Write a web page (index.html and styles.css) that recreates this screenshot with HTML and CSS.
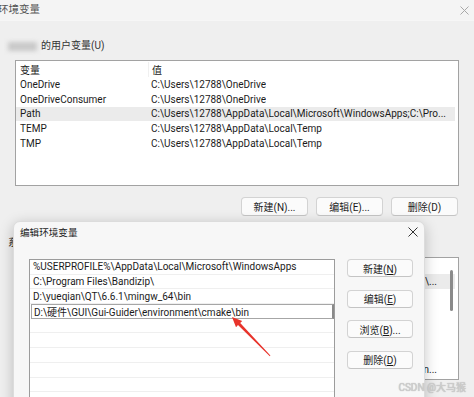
FILE: index.html
```html
<!DOCTYPE html>
<html lang="zh-CN">
<head>
    <meta charset="UTF-8">
    <title>环境变量</title>
    <link rel="stylesheet" href="styles.css">
</head>
<body>
    <div class="win">
        <div class="win-title">
            <span class="title-text">环境变量</span>
            <svg class="win-close" width="9" height="9" viewBox="0 0 9 9"><path d="M0.5 0.5 8.5 8.5M8.5 0.5 0.5 8.5" stroke="#a8a8a8" stroke-width="1"/></svg>
        </div>
        <div class="win-body">
            <div class="group-label"><span class="blur-name"></span>的用户变量(U)</div>
            <div class="listview">
                <div class="lv-head">
                    <span class="col-name">变量</span>
                    <span class="col-value">值</span>
                </div>
                <div class="lv-row"><span class="col-name">OneDrive</span><span class="col-value">C:\Users\12788\OneDrive</span></div>
                <div class="lv-row"><span class="col-name">OneDriveConsumer</span><span class="col-value">C:\Users\12788\OneDrive</span></div>
                <div class="lv-row selected"><span class="col-name">Path</span><span class="col-value">C:\Users\12788\AppData\Local\Microsoft\WindowsApps;C:\Pro...</span></div>
                <div class="lv-row"><span class="col-name">TEMP</span><span class="col-value">C:\Users\12788\AppData\Local\Temp</span></div>
                <div class="lv-row"><span class="col-name">TMP</span><span class="col-value">C:\Users\12788\AppData\Local\Temp</span></div>
            </div>
            <div class="btn-row">
                <button class="btn">新建(N)...</button>
                <button class="btn">编辑(E)...</button>
                <button class="btn">删除(D)</button>
            </div>

            <div class="group-label sys-label">系统变量(S)</div>
            <div class="listview sys-list">
                <div class="lv-head">
                    <span class="col-name">变量</span>
                    <span class="col-value">值</span>
                </div>
                <div class="lv-row selected"><span class="col-name">Path</span><span class="col-value end">C:\Program Files\Common Files\Oracle\Java\javapath;C:\WINDOWS\system32;C:\WINDOWS;%SYSTEMROOT%\System32\Wbem;C:\...</span></div>
                <div class="lv-row"><span class="col-name">PATHEXT</span><span class="col-value">.COM;.EXE;.BAT;.CMD;.VBS</span></div>
                <div class="lv-row"><span class="col-name">PROCESSOR_ARCHITECTURE</span><span class="col-value">AMD64</span></div>
                <div class="lv-row"><span class="col-name">PROCESSOR_IDENTIFIER</span><span class="col-value">Intel64 Family 6</span></div>
                <div class="lv-row"><span class="col-name">PROCESSOR_LEVEL</span><span class="col-value">6</span></div>
                <div class="lv-row"><span class="col-name">PROCESSOR_REVISION</span><span class="col-value">9a03</span></div>
                <div class="lv-row"><span class="col-name">PSModulePath</span><span class="col-value end">%ProgramFiles%\WindowsPowerShell\Modules;C:\WINDOWS\system32\WindowsPowerShell\v1.0\Modules;C:\Program Files\Intel\Win...</span></div>
                <div class="scroll-thumb"></div>
            </div>
        </div>
    </div>

    <!-- edit dialog, sits over the main window -->
    <div class="dialog">
        <div class="dlg-title">
            <span>编辑环境变量</span>
            <svg class="dlg-close" width="10" height="10" viewBox="0 0 10 10"><path d="M0.5 0.5 9.5 9.5M9.5 0.5 0.5 9.5" stroke="#333" stroke-width="1"/></svg>
        </div>
        <div class="dlg-body">
            <div class="path-list">
                <div class="path-row">%USERPROFILE%\AppData\Local\Microsoft\WindowsApps</div>
                <div class="path-row">C:\Program Files\Bandizip\</div>
                <div class="path-row">D:\yueqian\QT\6.6.1\mingw_64\bin</div>
                <div class="path-row editing"><span class="edit-box">D:\硬件\GUI\Gui-Guider\environment\cmake\bin</span></div>
                <div class="path-row"></div>
                <div class="path-row"></div>
                <div class="path-row"></div>
                <div class="path-row"></div>
                <div class="path-row"></div>
                <div class="path-row"></div>
            </div>
            <div class="dlg-buttons">
                <button class="btn">新建(<u>N</u>)</button>
                <button class="btn">编辑(<u>E</u>)</button>
                <button class="btn">浏览(<u>B</u>)...</button>
                <button class="btn">删除(<u>D</u>)</button>
            </div>
        </div>
    </div>

    <svg class="arrow" width="50" height="50" viewBox="0 0 50 50">
        <polygon points="7,7 17.2,11 15.2,13 45.4,45.6 44.8,46.2 13,15.1 11,17.3" fill="#e8332b"/>
    </svg>

    <div class="watermark">CSDN @大马猴</div>
</body>
</html>
```

FILE: styles.css
```css
body {
    margin: 0;
    width: 474px;
    height: 397px;
    overflow: hidden;
    position: relative;
    background: #efefef;
    font-family: Roboto, "Noto Sans CJK SC", sans-serif;
    font-size: 10px;
    color: #1b1b1b;
}
button {
    font-family: inherit;
}
.win-title {
    height: 20px;
    display: flex;
    align-items: center;
    justify-content: space-between;
    background: #f4f4f4;
    padding: 0 5px 0 0;
}
.title-text {
    font-size: 10.5px;
    color: #555;
    margin-left: -2px;
    margin-top: -3px;
}
.win-close {
    margin-top: 1px;
}
.win-body {
    padding: 18px 0 0 0;
    border-top: 1px solid #f6f6f6;
}
.group-label {
    height: 14px;
    line-height: 14px;
    padding-left: 8px;
    display: flex;
    align-items: center;
    color: #333;
}
.blur-name {
    display: inline-block;
    width: 29px;
    height: 9px;
    margin-right: 4px;
    background: #c9c9c9;
    filter: blur(2px);
}
.listview {
    margin: 7px 0 0 15px;
    width: 444px;
    height: 126px;
    box-sizing: border-box;
    border: 1px solid #a2a2a2;
    background: #fff;
    position: relative;
    overflow: hidden;
}
.lv-head {
    height: 16px;
    display: flex;
    align-items: center;
}
.lv-head .col-name {
    border-right: 1px solid #f0f0f0;
}
.lv-row {
    height: 14.75px;
    display: flex;
    align-items: center;
    margin-right: 3px;
}
.lv-row.selected {
    background: #ebebeb;
}
.col-name {
    width: 128px;
    padding-left: 4px;
    flex: none;
    white-space: nowrap;
}
.col-value {
    padding-left: 3px;
    white-space: nowrap;
    overflow: hidden;
}
.col-value.end {
    width: 286px;
    display: flex;
    justify-content: flex-end;
}
.btn-row {
    display: flex;
    justify-content: flex-end;
    gap: 8px;
    margin: 11px 16px 0 0;
}
.btn {
    width: 67px;
    height: 19px;
    padding: 0;
    background: #fbfbfb;
    border: 1px solid #d3d3d3;
    border-bottom-color: #c4c4c4;
    border-radius: 4px;
    font-size: 10px;
    color: #1b1b1b;
}
.sys-label {
    margin-top: 20px;
}
.sys-list {
    height: 123px;
}
.scroll-thumb {
    position: absolute;
    right: 5px;
    top: 12px;
    width: 3px;
    height: 41px;
    border-radius: 2px;
    background: #8a8a8a;
}

.dialog {
    position: absolute;
    left: 13px;
    top: 221px;
    width: 412px;
    height: 200px;
    background: #f7f7f7;
    border: 1px solid #dcdcdc;
    border-radius: 7px;
    box-sizing: border-box;
    box-shadow: 0 3px 14px rgba(0, 0, 0, 0.22);
}
.dlg-title {
    height: 19px;
    display: flex;
    align-items: center;
    justify-content: space-between;
    padding: 0 6px 0 6px;
    font-size: 9.6px;
    color: #222;
}
.dlg-body {
    display: flex;
    gap: 12px;
    padding: 18px 0 0 15px;
}
.path-list {
    width: 306px;
    height: 160px;
    box-sizing: border-box;
    border: 1px solid #9c9c9c;
    background: #fff;
}
.path-row {
    height: 14.7px;
    box-sizing: border-box;
    border-bottom: 1px solid #efefef;
    padding-left: 3px;
    display: flex;
    align-items: center;
    white-space: nowrap;
}
.path-row.editing {
    padding: 0 0 0 1px;
    border-bottom: none;
}
.edit-box {
    flex: 1;
    height: 100%;
    box-sizing: border-box;
    border: 1px solid #a6a6a6;
    border-right: 2px solid #8a8a8a;
    padding-left: 2px;
    display: flex;
    align-items: center;
}
.dlg-buttons {
    display: flex;
    flex-direction: column;
    gap: 12.5px;
    padding-top: 0;
}
.dlg-buttons .btn {
    width: 66px;
    height: 18px;
}
.dlg-buttons u {
    text-underline-offset: 1px;
}

.arrow {
    position: absolute;
    left: 225px;
    top: 310px;
}
.watermark {
    position: absolute;
    right: 8px;
    bottom: 3px;
    font-size: 10px;
    color: #cfcfcf;
    text-shadow: 0 0 1px rgba(0, 0, 0, 0.35);
}
```
